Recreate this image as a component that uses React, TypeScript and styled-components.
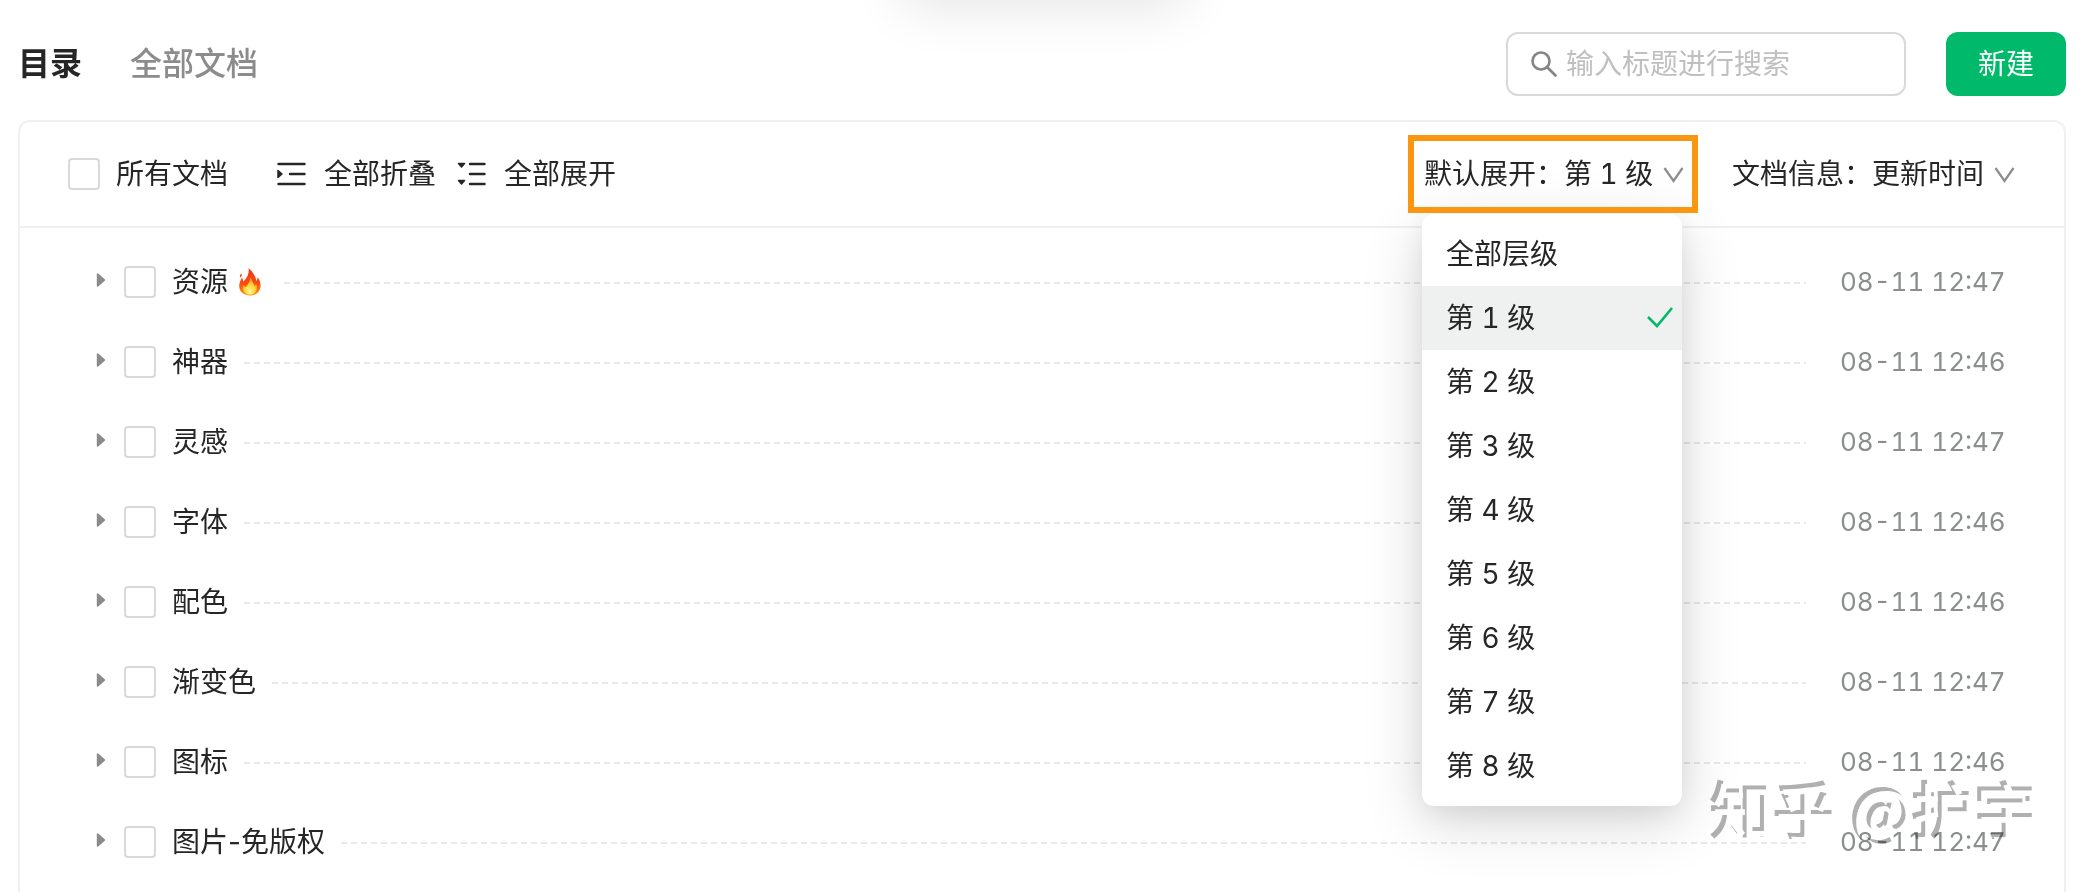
import React from "react";
import styled, { createGlobalStyle } from "styled-components";

const fontStack = `Inter, "Noto Sans CJK SC", sans-serif`;

const GlobalStyle = createGlobalStyle`
  * { box-sizing: border-box; }
  html, body, #root { height: 100%; }
  body {
    margin: 0;
    background: #fff;
    color: #262626;
    font-family: ${fontStack};
    font-size: 28px;
    line-height: 40px;
    overflow: hidden;
  }
  button, input { font: inherit; color: inherit; }
`;

const Page = styled.div`
  position: relative;
  display: flex;
  flex-direction: column;
  height: 100%;
  padding: 32px 22px 0 18px;
`;

const TopShadow = styled.div`
  position: absolute;
  top: -60px;
  left: 50%;
  width: 280px;
  height: 60px;
  margin-left: -140px;
  border-radius: 12px;
  box-shadow: 0 4px 56px rgba(0, 0, 0, 0.12);
`;

const TopBar = styled.header`
  display: flex;
  align-items: center;
  height: 64px;
  margin-bottom: 24px;
`;

const Tabs = styled.nav`
  display: flex;
  gap: 48px;
  flex: 1;
`;

const Tab = styled.a<{ $active?: boolean }>`
  font-size: 32px;
  font-weight: ${(p) => (p.$active ? 700 : 500)};
  color: ${(p) => (p.$active ? "#262626" : "#8c8c8c")};
  text-decoration: none;
`;

const SearchBox = styled.label`
  display: flex;
  align-items: center;
  gap: 8px;
  width: 400px;
  height: 64px;
  padding: 0 22px;
  border: 2px solid #d9d9d9;
  border-radius: 12px;
`;

const SearchInput = styled.input`
  flex: 1;
  min-width: 0;
  padding: 0;
  border: 0;
  outline: 0;
  background: transparent;
  &::placeholder { color: #bfbfbf; opacity: 1; }
`;

const CreateButton = styled.button`
  width: 120px;
  height: 64px;
  margin-left: 40px;
  padding: 0;
  border: 0;
  border-radius: 12px;
  background: #00b96b;
  color: #fff;
`;

const Panel = styled.main`
  flex: 1;
  display: flex;
  flex-direction: column;
  border: 2px solid #f0f0f0;
  border-bottom: 0;
  border-radius: 12px 12px 0 0;
`;

const Toolbar = styled.div`
  display: flex;
  align-items: center;
  height: 106px;
  padding: 0 48px;
  border-bottom: 2px solid #f0f0f0;
`;

const CheckLabel = styled.label`
  display: flex;
  align-items: center;
  gap: 16px;
`;

const Checkbox = styled.input.attrs({ type: "checkbox" })`
  appearance: none;
  flex: none;
  width: 32px;
  height: 32px;
  margin: 0;
  border: 2px solid #d9d9d9;
  border-radius: 4px;
  background: #fff;
`;

const FoldActions = styled.div`
  display: flex;
  gap: 20px;
  flex: 1;
  margin-left: 48px;
`;

const PlainButton = styled.button`
  display: flex;
  align-items: center;
  gap: 10px;
  padding: 0;
  border: 0;
  background: transparent;
  white-space: nowrap;
`;

const FoldButton = styled(PlainButton)`
  gap: 18px;
`;

const LevelPicker = styled.div`
  position: relative;
  margin-right: 34px;
  font-variant-numeric: tabular-nums;
`;

const LevelButton = styled(PlainButton)`
  position: relative;
  z-index: 2;
  width: 290px;
  height: 78px;
  padding-left: 10px;
  border: 6px solid #fa9610;
  font-variant-numeric: inherit;
`;

const Menu = styled.ul`
  position: absolute;
  top: 79px;
  left: 14px;
  width: 260px;
  margin: 0;
  padding: 8px 0;
  list-style: none;
  background: #fff;
  border-radius: 12px;
  box-shadow: 0 16px 60px rgba(0, 0, 0, 0.16), 0 8px 24px rgba(0, 0, 0, 0.06);
  z-index: 1;
`;

const MenuItem = styled.button<{ $selected?: boolean }>`
  display: flex;
  align-items: center;
  justify-content: space-between;
  width: 100%;
  height: 64px;
  padding: 0 8px 0 24px;
  border: 0;
  text-align: left;
  font-variant-numeric: inherit;
  background: ${(p) => (p.$selected ? "#eff0f0" : "transparent")};
`;

const Rows = styled.ul`
  margin: 0;
  padding: 14px 56px 0 76px;
  list-style: none;
`;

const Row = styled.li`
  display: flex;
  align-items: center;
  height: 80px;
`;

const Toggle = styled.button`
  display: flex;
  width: 28px;
  padding: 0 0 4px;
  border: 0;
  background: transparent;
`;

const Leader = styled.span`
  flex: 1;
  height: 2px;
  margin: 2px 34px 0 16px;
  background: repeating-linear-gradient(to right, #e7e9e8 0 6px, transparent 6px 10px);
`;

const Updated = styled.time`
  width: 168px;
  color: #8a8f8d;
  font-size: 26px;
  font-variant-numeric: tabular-nums;
  white-space: nowrap;
`;

const Watermark = styled.div`
  position: absolute;
  right: 48px;
  bottom: 42px;
  z-index: 2;
  font-family: "Noto Sans CJK SC", sans-serif;
  font-size: 63px;
  font-weight: 500;
  line-height: 80px;
  color: #fff;
  text-shadow: -4px -4px 0 #b0b0b0;
  mix-blend-mode: multiply;
  pointer-events: none;
`;

const CollapseIcon = () => (
  <svg width="30" height="24" viewBox="-1 0 30 24" fill="none" stroke="#262626" strokeWidth="2.4" strokeLinecap="round">
    <path d="M1.500 2H27.500M13 12H27.500M1.500 22H27.500" />
    <path d="M1 8.500V15.500L5 12Z" fill="#262626" strokeWidth="1.500" strokeLinejoin="round" />
  </svg>
);

const ExpandIcon = () => (
  <svg width="30" height="24" viewBox="-1 0 30 24" fill="none" stroke="#262626" strokeWidth="2.4" strokeLinecap="round">
    <path d="M13 2H27.500M13 12H27.500M13 22H27.500" />
    <path d="M1.500 1.500H7.500L4.500 5ZM1.500 18.500H7.500L4.500 22Z" fill="#262626" strokeWidth="1.500" strokeLinejoin="round" />
  </svg>
);

const ChevronIcon = () => (
  <svg width="22" height="20" viewBox="0 0 22 20" fill="none" stroke="#8c8c8c" strokeWidth="2.200">
    <path d="M1.500 4L10.500 17L19.500 4" />
  </svg>
);

const SearchIcon = () => (
  <svg width="28" height="28" viewBox="0 0 28 28" fill="none" stroke="#858585" strokeWidth="2.600" strokeLinecap="round">
    <circle cx="11" cy="11" r="8.500" />
    <path d="M17.500 17.500L25.500 25.500" />
  </svg>
);

const CheckIcon = () => (
  <svg width="28" height="24" viewBox="0 0 28 24" fill="none" stroke="#00b96b" strokeWidth="2.600">
    <path d="M2 11L11 20L26 2" />
  </svg>
);

const CaretIcon = () => (
  <svg width="10" height="16" viewBox="0 0 10 16" fill="#8a8a8a">
    <path d="M.8 2.200Q.8 .6 2.200 1.600L8.800 7.200Q9.600 8 8.800 8.800L2.200 14.400Q.8 15.400 .8 13.800Z" />
  </svg>
);

const FlameIcon = () => (
  <svg width="24" height="28" viewBox="0 0 24 28">
    <defs>
      <linearGradient id="flame" x1="0" y1="0" x2="0" y2="1">
        <stop offset="0" stopColor="#e8381a" />
        <stop offset=".55" stopColor="#fb4a12" />
        <stop offset="1" stopColor="#ff9a10" />
      </linearGradient>
      <radialGradient id="core" cx=".5" cy=".8" r=".7">
        <stop offset="0" stopColor="#fff3a0" />
        <stop offset=".5" stopColor="#ffd83a" />
        <stop offset="1" stopColor="#ff9c14" />
      </radialGradient>
    </defs>
    <path fill="url(#flame)" d="M10.500 .2C14 3 18 8 18.300 13C19.300 12 19.600 10.500 19.400 9C22 12 23 16 22.400 19.500C21.500 24.500 17.500 27.500 12 27.500C6 27.500 1.500 24 1.200 18.500C1 14.500 3 12 4 9.500C4.800 11 5 12.500 5.200 13.500C8.500 10.500 11.500 6 10.500 .2ZM3 5.500C4.200 6.500 3.800 8.500 2.600 9.500C1.500 8.500 2 6.800 3 5.500Z" />
    <path fill="url(#core)" d="M12.500 9C13.500 13 16 15 16.500 18C17.300 17.500 17.800 16.500 18 15.500C20.500 21 17.500 26.800 12 26.800C6.500 26.800 3.500 22 5.500 17C6.300 18 6.800 18.800 7.500 19C10.500 16.500 12 13 12.500 9Z" />
  </svg>
);

const Flame = styled.span`
  display: flex;
  width: 32px;
  margin-left: -8px;
  padding-left: 2px;
`;

const levels = ["全部层级", ...[1, 2, 3, 4, 5, 6, 7, 8].map((n) => `第 ${n} 级`)];

const docs = [
  { title: "资源", time: "08-11 12:47", hot: true },
  { title: "神器", time: "08-11 12:46" },
  { title: "灵感", time: "08-11 12:47" },
  { title: "字体", time: "08-11 12:46" },
  { title: "配色", time: "08-11 12:46" },
  { title: "渐变色", time: "08-11 12:47" },
  { title: "图标", time: "08-11 12:46" },
  { title: "图片-免版权", time: "08-11 12:47" },
];

export default function App() {
  return (
    <>
      <GlobalStyle />
      <Page>
        <TopShadow />
        <TopBar>
          <Tabs>
            <Tab href="#toc" $active>目录</Tab>
            <Tab href="#all">全部文档</Tab>
          </Tabs>
          <SearchBox>
            <SearchIcon />
            <SearchInput type="text" aria-label="搜索" placeholder="输入标题进行搜索" />
          </SearchBox>
          <CreateButton type="button">新建</CreateButton>
        </TopBar>
        <Panel>
          <Toolbar>
            <CheckLabel><Checkbox />所有文档</CheckLabel>
            <FoldActions>
              <FoldButton type="button"><CollapseIcon />全部折叠</FoldButton>
              <FoldButton type="button"><ExpandIcon />全部展开</FoldButton>
            </FoldActions>
            <LevelPicker>
              <LevelButton type="button" aria-haspopup="menu">默认展开：第 1 级<ChevronIcon /></LevelButton>
              <Menu>
                {levels.map((level, i) => (
                  <li key={level}>
                    <MenuItem type="button" $selected={i === 1}>
                      {level}
                      {i === 1 && <CheckIcon />}
                    </MenuItem>
                  </li>
                ))}
              </Menu>
            </LevelPicker>
            <PlainButton type="button" aria-haspopup="menu">文档信息：更新时间<ChevronIcon /></PlainButton>
          </Toolbar>
          <Rows>
            {docs.map((doc) => (
              <Row key={doc.title}>
                <Toggle type="button" aria-label={`展开${doc.title}`}><CaretIcon /></Toggle>
                <CheckLabel>
                  <Checkbox />
                  {doc.title}
                  {doc.hot && <Flame><FlameIcon /></Flame>}
                </CheckLabel>
                <Leader />
                <Updated>{doc.time}</Updated>
              </Row>
            ))}
          </Rows>
        </Panel>
        <Watermark>知乎 @护宇</Watermark>
      </Page>
    </>
  );
}
